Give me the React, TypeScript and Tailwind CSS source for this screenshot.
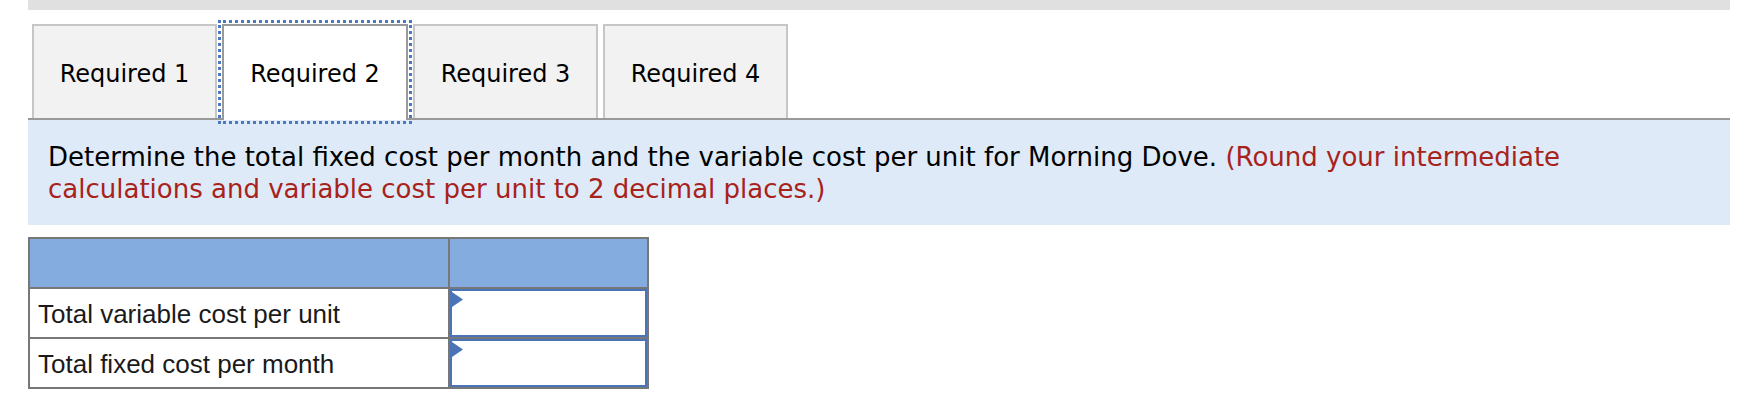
const tabs = ["Required 1", "Required 2", "Required 3", "Required 4"];

const rows = ["Total variable cost per unit", "Total fixed cost per month"];

function InputCell() {
  return (
    <div className="relative h-[48px] w-full border-2 border-[#4b74b8] bg-white">
      {/* little blue marker at the top-left corner */}
      <svg
        className="absolute left-0 top-[1px]"
        width="11"
        height="15"
        viewBox="0 0 11 15"
      >
        <polygon points="0,0 11,7.5 0,15" fill="#4b74b8" />
      </svg>
    </div>
  );
}

export default function App() {
  return (
    <div className="w-[1764px] h-[406px] bg-white">
      <div className="ml-[28px] w-[1702px]">
        {/* Top strip */}
        <div className="h-[10px] bg-[#e0e0e0]" />

        {/* Tabs */}
        <div className="mt-[14px] flex gap-[5px] pl-[4px] border-b-2 border-[#999999] font-['DejaVu_Sans',sans-serif] text-[24px] text-black">
          {tabs.map((t, i) =>
            i === 1 ? (
              <div
                key={t}
                className="relative -mb-[2px] flex h-[96px] w-[186px] items-center justify-center border-2 border-b-0 border-[#999999] bg-white pt-[2px] outline-[3px] outline-dotted outline-[#4a78c2] outline-offset-[1px]"
              >
                {t}
              </div>
            ) : (
              <div
                key={t}
                className="flex h-[94px] w-[185px] items-center justify-center border-2 border-b-0 border-[#c6c6c6] bg-[#f2f2f2] pt-[4px]"
              >
                {t}
              </div>
            )
          )}
        </div>

        {/* Instructions */}
        <div className="h-[105px] bg-[#deeaf7] pl-[20px] pr-[40px] pt-[21px] font-['DejaVu_Sans',sans-serif] text-[26px] leading-[32px] text-black">
          Determine the total fixed cost per month and the variable cost per unit for Morning Dove.{" "}
          <span className="text-[#a8221c]">
            (Round your intermediate calculations and variable cost per unit to 2 decimal places.)
          </span>
        </div>

        {/* Answer table */}
        <table className="mt-[12px] border-collapse font-['Liberation_Sans',Arial,sans-serif] text-[26px] text-[#1a1a1a]">
          <tbody>
            <tr className="h-[50px] bg-[#84acdf]">
              <td className="w-[420px] border-2 border-[#777777]" />
              <td className="w-[199px] border-2 border-[#777777]" />
            </tr>
            {rows.map((r) => (
              <tr key={r} className="h-[50px]">
                <td className="border-2 border-[#777777] px-[8px] pt-[2px] leading-[30px]">{r}</td>
                <td className="border-2 border-[#777777] p-0">
                  <InputCell />
                </td>
              </tr>
            ))}
          </tbody>
        </table>
      </div>
    </div>
  );
}
